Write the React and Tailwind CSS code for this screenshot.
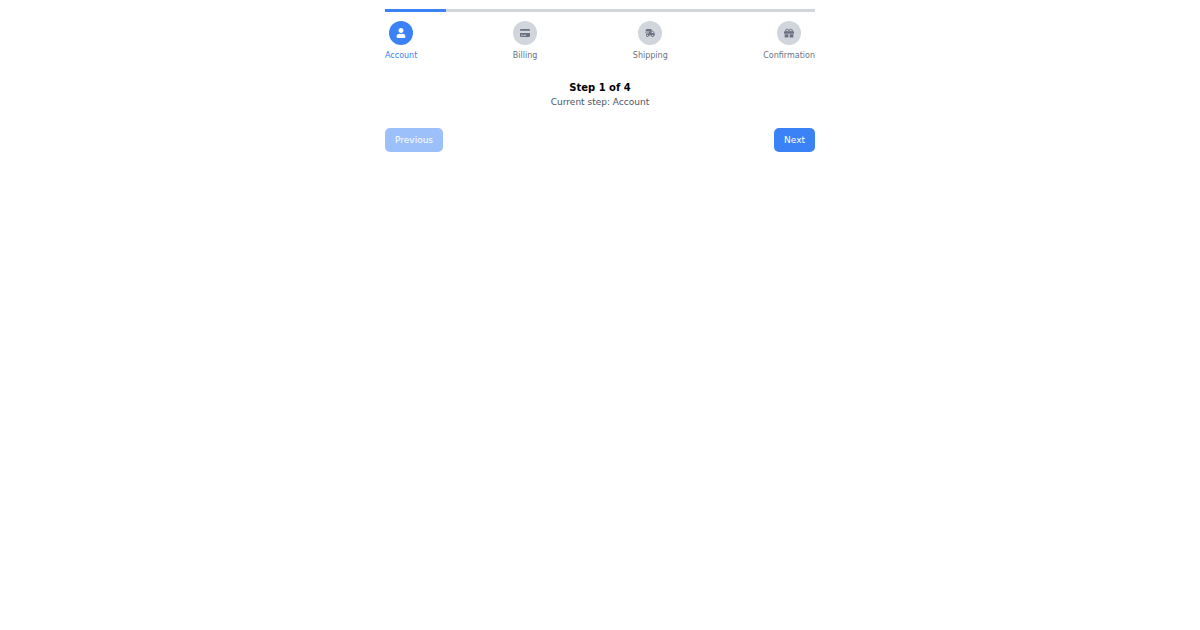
/**
 * App.jsx
 * Checkout stepper with a progress bar and previous / next controls.
 */
import { useState } from 'react';
import { FaUser, FaCreditCard, FaShippingFast, FaGift } from 'react-icons/fa';

const steps = [
  { label: 'Account', icon: FaUser },
  { label: 'Billing', icon: FaCreditCard },
  { label: 'Shipping', icon: FaShippingFast },
  { label: 'Confirmation', icon: FaGift },
];

export default function App() {
  const [current, setCurrent] = useState(0);

  // The bar ends between the active step and the next one
  const progress = ((current * 2 + 1) / (steps.length * 2 - 1)) * 100;

  return (
    <main className="mx-auto w-full max-w-[448px] px-[9px] py-[9px] font-['DejaVu_Sans',sans-serif] text-[9px] leading-[14px]">
      {/* Progress */}
      <div className="h-[3px] bg-gray-300">
        <div className="h-full bg-[#3b82f6]" style={{ width: `${progress}%` }} />
      </div>

      {/* Steps */}
      <ol className="mt-[9px] flex justify-between">
        {steps.map(({ label, icon: Icon }, i) => (
          <li key={label} className="flex flex-col items-center" aria-current={i === current ? 'step' : undefined}>
            <span
              className={`flex h-6 w-6 items-center justify-center rounded-full ${
                i <= current ? 'bg-[#3b82f6] text-white' : 'bg-gray-300 text-gray-500'
              }`}
            >
              <Icon className="h-[10px] w-[10px]" />
            </span>
            <span className={`mt-1 text-[8px] leading-[14px] ${i <= current ? 'text-[#3b82f6]' : 'text-gray-500'}`}>
              {label}
            </span>
          </li>
        ))}
      </ol>

      {/* Summary */}
      <div className="mt-[17px] text-center">
        <h2 className="text-[10px] leading-[15px] font-bold text-black">
          Step {current + 1} of {steps.length}
        </h2>
        <p className="text-gray-600">Current step: {steps[current].label}</p>
      </div>

      {/* Controls */}
      <div className="mt-[19px] flex justify-between">
        <button
          type="button"
          disabled={current === 0}
          onClick={() => setCurrent(current - 1)}
          className="rounded-[5px] px-[10px] py-[5px] bg-[#3b82f6] text-white disabled:opacity-50"
        >
          Previous
        </button>
        <button
          type="button"
          disabled={current === steps.length - 1}
          onClick={() => setCurrent(current + 1)}
          className="rounded-[5px] px-[10px] py-[5px] bg-[#3b82f6] text-white disabled:opacity-50"
        >
          Next
        </button>
      </div>
    </main>
  );
}
